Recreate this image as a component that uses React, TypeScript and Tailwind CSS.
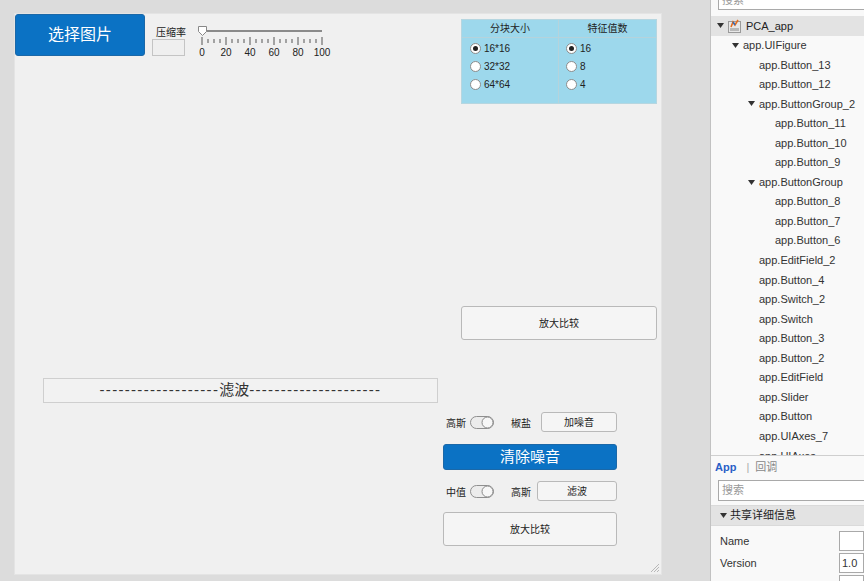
const font = "font-['Liberation_Sans','Noto_Sans_CJK_SC',sans-serif]";

type Node = { label: string; level: number; open?: boolean };

const tree: Node[] = [
  { label: "app.UIFigure", level: 1, open: true },
  { label: "app.Button_13", level: 2 },
  { label: "app.Button_12", level: 2 },
  { label: "app.ButtonGroup_2", level: 2, open: true },
  { label: "app.Button_11", level: 3 },
  { label: "app.Button_10", level: 3 },
  { label: "app.Button_9", level: 3 },
  { label: "app.ButtonGroup", level: 2, open: true },
  { label: "app.Button_8", level: 3 },
  { label: "app.Button_7", level: 3 },
  { label: "app.Button_6", level: 3 },
  { label: "app.EditField_2", level: 2 },
  { label: "app.Button_4", level: 2 },
  { label: "app.Switch_2", level: 2 },
  { label: "app.Switch", level: 2 },
  { label: "app.Button_3", level: 2 },
  { label: "app.Button_2", level: 2 },
  { label: "app.EditField", level: 2 },
  { label: "app.Slider", level: 2 },
  { label: "app.Button", level: 2 },
  { label: "app.UIAxes_7", level: 2 },
  { label: "app.UIAxes", level: 2 },
];

function Caret() {
  return (
    <svg width="7" height="5" viewBox="0 0 7 5" className="shrink-0">
      <path d="M0 0h7L3.5 5z" fill="#333" />
    </svg>
  );
}

function Radio({ label, on }: { label: string; on?: boolean }) {
  return (
    <div className="flex h-[18px] items-center gap-[3px]">
      <span className="flex h-[11px] w-[11px] items-center justify-center rounded-full border border-[#8c8c8c] bg-white">
        {on && <span className="h-[5px] w-[5px] rounded-full bg-[#222]" />}
      </span>
      <span className="text-[10px] text-[#222]">{label}</span>
    </div>
  );
}

function Toggle() {
  return (
    <svg width="24" height="13" viewBox="0 0 24 13">
      <rect x="0.5" y="0.5" width="23" height="12" rx="6" fill="#ececec" stroke="#8f8f8f" />
      <circle cx="17.5" cy="6.5" r="5.5" fill="#f7f7f7" stroke="#8a8a8a" />
    </svg>
  );
}

function Slider() {
  const ticks = Array.from({ length: 21 }, (_, i) => i);
  return (
    <svg width="140" height="40" viewBox="0 0 140 40">
      <line x1="6" y1="8" x2="126" y2="8" stroke="#8a8a8a" strokeWidth="2" />
      {ticks.map((i) => (
        <line
          key={i}
          x1={6 + i * 6}
          x2={6 + i * 6}
          y1={i % 4 === 0 ? 14 : 16}
          y2={i % 4 === 0 ? 22 : 20}
          stroke="#555"
          strokeWidth="1"
        />
      ))}
      <path d="M2.5 3.5h8v5l-4 4-4-4z" fill="#fff" stroke="#888" />
      {[0, 20, 40, 60, 80, 100].map((v, i) => (
        <text
          key={v}
          x={6 + i * 24}
          y="33"
          fontSize="10"
          textAnchor="middle"
          fill="#222"
          fontFamily="Liberation Sans, sans-serif"
        >
          {v}
        </text>
      ))}
    </svg>
  );
}

function GrayButton({ className, label }: { className: string; label: string }) {
  return (
    <div
      className={`absolute flex items-center justify-center rounded-[3px] border border-[#b9b9b9] bg-[#f5f5f5] text-[10px] text-[#222] ${className}`}
    >
      {label}
    </div>
  );
}

function Canvas() {
  return (
    <div className="relative h-[562px] w-[648px] border border-[#e4e4e4] bg-[#f0f0f0]">
      <div className="absolute left-0 top-0 flex h-[42px] w-[130px] items-center justify-center rounded-[3px] border border-[#1b68a8] bg-[#0b72c4] text-[16px] text-white">
        选择图片
      </div>
      <div className="absolute left-[141px] top-[11px] text-[10px] text-[#222]">压缩率</div>
      <div className="absolute left-[137px] top-[25px] h-[17px] w-[33px] border border-[#c4c4c4] bg-[#efefef]" />
      <div className="absolute left-[181px] top-[9px]">
        <Slider />
      </div>

      <div className="absolute left-[446px] top-[5px] grid h-[85px] w-[196px] grid-cols-2 border border-[#b6d6e0] bg-[#9dd8ec]">
        <div className="flex flex-col border-r border-[#b5d3dc]">
          <div className="flex h-[18px] items-center justify-center border-b border-[#b5d3dc] text-[10px] text-[#222]">
            分块大小
          </div>
          <div className="flex flex-col pl-[8px] pt-[1px]">
            <Radio label="16*16" on />
            <Radio label="32*32" />
            <Radio label="64*64" />
          </div>
        </div>
        <div className="flex flex-col">
          <div className="flex h-[18px] items-center justify-center border-b border-[#b5d3dc] text-[10px] text-[#222]">
            特征值数
          </div>
          <div className="flex flex-col pl-[7px] pt-[1px]">
            <Radio label="16" on />
            <Radio label="8" />
            <Radio label="4" />
          </div>
        </div>
      </div>

      <GrayButton className="left-[446px] top-[292px] h-[34px] w-[196px]" label="放大比较" />

      <div className="absolute left-[28px] top-[364px] flex h-[25px] w-[395px] items-center justify-center border border-[#cfcfcf] bg-[#f2f2f2] text-[15px] text-[#333]">
        <span className="tracking-[1.3px]">-------------------</span>
        <span>滤波</span>
        <span className="tracking-[1.3px]">---------------------</span>
      </div>

      <div className="absolute left-[431px] top-[402px] text-[10px] text-[#222]">高斯</div>
      <div className="absolute left-[455px] top-[402px]">
        <Toggle />
      </div>
      <div className="absolute left-[496px] top-[402px] text-[10px] text-[#222]">椒盐</div>
      <GrayButton className="left-[526px] top-[398px] h-[20px] w-[76px]" label="加噪音" />

      <div className="absolute left-[428px] top-[430px] flex h-[26px] w-[174px] items-center justify-center rounded-[3px] border border-[#1b68a8] bg-[#0b72c4] text-[15px] text-white">
        清除噪音
      </div>

      <div className="absolute left-[431px] top-[471px] text-[10px] text-[#222]">中值</div>
      <div className="absolute left-[455px] top-[471px]">
        <Toggle />
      </div>
      <div className="absolute left-[496px] top-[471px] text-[10px] text-[#222]">高斯</div>
      <GrayButton className="left-[522px] top-[467px] h-[20px] w-[80px]" label="滤波" />

      <GrayButton className="left-[428px] top-[498px] h-[34px] w-[174px]" label="放大比较" />

      <svg width="11" height="11" viewBox="0 0 11 11" className="absolute bottom-[2px] right-[2px]">
        {[3, 6, 9, 12].map((d) => (
          <line key={d} x1={d} y1="11" x2="11" y2={d} stroke="#aaa" strokeWidth="0.8" />
        ))}
      </svg>
    </div>
  );
}

function AppIcon() {
  return (
    <svg width="13" height="14" viewBox="0 0 13 14" className="shrink-0">
      <rect x="0.5" y="2.5" width="12" height="11" fill="#e8e8e8" stroke="#9a9a9a" />
      <rect x="2" y="9" width="9" height="3" fill="#b8b8b8" />
      <path d="M3 8l2-5 2 3 3-5" fill="none" stroke="#e36b1c" strokeWidth="1.6" />
      <path d="M5 3l2 3" stroke="#2a6fc9" strokeWidth="1.4" />
    </svg>
  );
}

function RightPanel() {
  return (
    <div className="flex h-full w-[154px] flex-col overflow-hidden border-l border-[#c2c2c2] bg-[#f9f9f9] text-[11px] text-[#333]">
      <div className="shrink-0 px-[7px]">
        <div className="-mt-[10px] flex h-[20px] w-[160px] items-center border border-[#a9a9a9] bg-white pl-[3px] text-[#999]">
          搜索
        </div>
      </div>
      <div className="mt-[6px] h-[439px] shrink-0 overflow-hidden">
        <div className="flex h-[19.5px] items-center gap-[3px] bg-[#e3e3e3] pl-[6px]">
          <Caret />
          <span className="ml-[1px]">
            <AppIcon />
          </span>
          <span className="ml-[2px] text-[#222]">PCA_app</span>
        </div>
        {tree.map((n) => (
          <div
            key={n.label}
            className="flex h-[19.55px] items-center"
            style={{ paddingLeft: 32 + (n.level - 1) * 16 - (n.open ? 11 : 0) }}
          >
            {n.open && (
              <span className="mr-[4px]">
                <Caret />
              </span>
            )}
            <span>{n.label}</span>
          </div>
        ))}
      </div>
      <div className="shrink-0 border-t border-[#cfcfcf]" />
      <div className="flex h-[22px] shrink-0 items-center pl-[4px]">
        <span className="font-bold text-[#2a5fc7]">App</span>
        <span className="ml-[10px] text-[#aaa]">|</span>
        <span className="ml-[6px] text-[#888]">回调</span>
      </div>
      <div className="mt-[2px] shrink-0 pl-[7px]">
        <div className="flex h-[21px] w-[160px] items-center border border-[#a9a9a9] bg-white pl-[3px] text-[#999]">
          搜索
        </div>
      </div>
      <div className="mt-[4px] flex h-[21px] shrink-0 items-center gap-[3px] border-y border-[#dadada] bg-[#e3e3e3] pl-[9px] text-[#222]">
        <Caret />
        <span>共享详细信息</span>
      </div>
      <div className="flex shrink-0 flex-col gap-[2px] pt-[5px]">
        <div className="flex h-[20px] items-center justify-between pl-[9px]">
          <span>Name</span>
          <span className="h-[20px] w-[25px] border border-[#a9a9a9] bg-white" />
        </div>
        <div className="flex h-[20px] items-center justify-between pl-[9px]">
          <span>Version</span>
          <span className="flex h-[20px] w-[25px] items-center border border-[#a9a9a9] bg-white pl-[2px]">1.0</span>
        </div>
        <div className="flex h-[20px] items-center justify-end">
          <span className="h-[20px] w-[25px] border border-[#a9a9a9] bg-white" />
        </div>
      </div>
    </div>
  );
}

export default function App() {
  return (
    <div className={`flex h-[581px] w-[864px] overflow-hidden bg-[#dcdcdc] ${font}`}>
      <div className="flex-1 pl-[14px] pt-[13px]">
        <Canvas />
      </div>
      <RightPanel />
    </div>
  );
}
